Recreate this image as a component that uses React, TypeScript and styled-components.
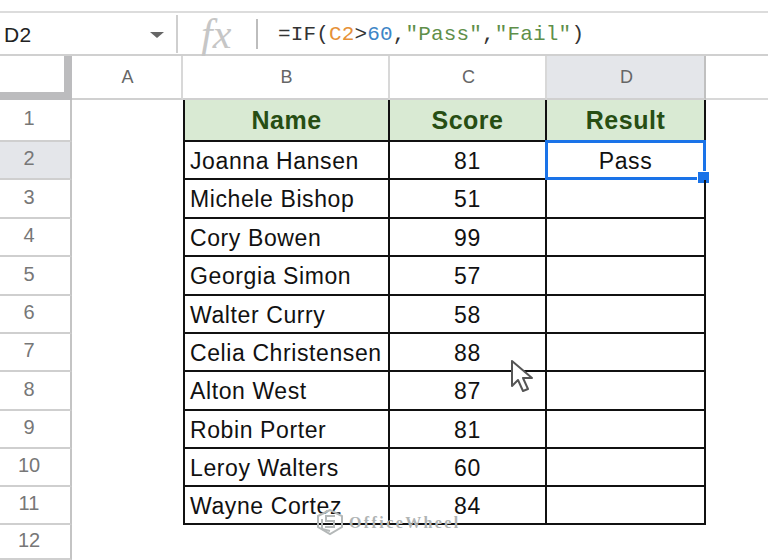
import React from 'react';
import styled, { createGlobalStyle } from 'styled-components';

const people: [string, number][] = [
  ['Joanna Hansen', 81],
  ['Michele Bishop', 51],
  ['Cory Bowen', 99],
  ['Georgia Simon', 57],
  ['Walter Curry', 58],
  ['Celia Christensen', 88],
  ['Alton West', 87],
  ['Robin Porter', 81],
  ['Leroy Walters', 60],
  ['Wayne Cortez', 84],
];

const App: React.FC = () => (
  <Page>
    <GlobalStyle />
    <TopStrip />
    <FormulaBar>
      <NameBox>
        <span>D2</span>
        <Caret />
      </NameBox>
      <FxBox>
        <FxLabel>fx</FxLabel>
        <FxDivider />
      </FxBox>
      <Formula>
        =IF(<Ref>C2</Ref>&gt;<Num>60</Num>,<Str>"Pass"</Str>,<Str>"Fail"</Str>)
      </Formula>
    </FormulaBar>
    <Sheet>
      <Corner />
      <ColHead>A</ColHead>
      <ColHead>B</ColHead>
      <ColHead>C</ColHead>
      <ColHead $active>D</ColHead>
      <ColFill />

      <RowHead>1</RowHead>
      <Blank />
      <NameTitle>Name</NameTitle>
      <TitleCell>Score</TitleCell>
      <TitleCell>Result</TitleCell>
      <Blank />

      {people.map(([name, score], i) => (
        <React.Fragment key={name}>
          <RowHead $active={i === 0}>{i + 2}</RowHead>
          <Blank />
          <NameCell>{name}</NameCell>
          <DataCell>{score}</DataCell>
          <DataCell>
            {i === 0 && (
              <>
                Pass
                <Selection>
                  <Handle />
                </Selection>
              </>
            )}
          </DataCell>
          <Blank />
        </React.Fragment>
      ))}

      <RowHead>12</RowHead>
      <Blank />
      <Blank />
      <Blank />
      <Blank />
      <Blank />

      <Pointer width="24" height="36" viewBox="0 0 24 36">
        <path
          d="M2 2 L2 27 L8 21 L13 32 L18 30 L13 19 L22 19 Z"
          fill="#fff"
          stroke="#555"
          strokeWidth="2"
          strokeLinejoin="round"
        />
      </Pointer>
      <Watermark>
        <svg width="32" height="28" viewBox="0 0 32 28" fill="none" stroke="#b4b8b8" strokeWidth="2">
          <path d="M4 7 L16 1 L28 7 L28 18 L16 25 L4 18 Z" />
          <path d="M21 7 L12 7 L12 12 L20 12 L20 18 L11 18" />
          <path d="M8 10 L8 20 L16 22" />
        </svg>
        <WatermarkText>OfficeWheel</WatermarkText>
      </Watermark>
    </Sheet>
  </Page>
);

const GlobalStyle = createGlobalStyle`
  html, body { margin: 0; padding: 0; background: #fff; }
`;

const Page = styled.div`
  width: 768px;
  height: 560px;
  overflow: hidden;
  display: flex;
  flex-direction: column;
  background: #fff;
  font-family: "Liberation Sans", Arial, sans-serif;
`;

const TopStrip = styled.div`
  height: 13px;
  box-sizing: border-box;
  border-bottom: 2px solid #dcdcdc;
`;

const FormulaBar = styled.div`
  height: 43px;
  box-sizing: border-box;
  border-bottom: 2px solid #d0d0d0;
  display: flex;
  align-items: center;
`;

const NameBox = styled.div`
  width: 178px;
  height: 38px;
  box-sizing: border-box;
  padding: 2px 12px 0 4px;
  display: flex;
  align-items: center;
  justify-content: space-between;
  border-right: 2px solid #cfcfcf;
  font-size: 21px;
  letter-spacing: 0.4px;
  color: #222;
`;

const Caret = styled.span`
  width: 0;
  height: 0;
  border-left: 7px solid transparent;
  border-right: 7px solid transparent;
  border-top: 6px solid #666;
`;

const FxBox = styled.div`
  width: 80px;
  display: flex;
  align-items: center;
  justify-content: space-between;
  padding-left: 23px;
  box-sizing: border-box;
`;

const FxLabel = styled.span`
  font-family: "Liberation Serif", serif;
  font-style: italic;
  font-size: 42px;
  line-height: 38px;
  color: #c6c6c6;
`;

const FxDivider = styled.span`
  width: 2px;
  height: 30px;
  background: #bdbdbd;
`;

const Formula = styled.div`
  margin-left: 20px;
  padding-top: 2px;
  font-family: "Liberation Mono", monospace;
  font-size: 21px;
  letter-spacing: 0.15px;
  color: #333;
  white-space: pre;
`;

const Ref = styled.span`color: #e69138;`;
const Num = styled.span`color: #3d85c6;`;
const Str = styled.span`color: #5f8f4a;`;

const Sheet = styled.div`
  position: relative;
  flex: 1;
  display: grid;
  grid-template-columns: 72px 111px 207px 157px 159px 1fr;
  grid-template-rows: 44px 42px 38px 39px 38px 39px 38px 38px 39px 38px 38px 38px 35px;
`;

const Corner = styled.div`
  box-sizing: border-box;
  border-right: 8px solid #bcbcbe;
  border-bottom: 8px solid #bcbcbe;
`;

const ColHead = styled.div<{ $active?: boolean }>`
  box-sizing: border-box;
  display: flex;
  align-items: center;
  justify-content: center;
  padding-left: 2px;
  font-size: 18px;
  color: #666;
  background: ${({ $active }) => ($active ? '#e4e6ea' : '#fff')};
  border-right: 2px solid ${({ $active }) => ($active ? '#c0c0c0' : '#d8d8d8')};
  border-bottom: 2px solid #d0d0d0;
`;

const ColFill = styled.div`
  border-bottom: 2px solid #d8d8d8;
`;

const RowHead = styled.div<{ $active?: boolean }>`
  box-sizing: border-box;
  display: flex;
  align-items: center;
  justify-content: center;
  padding: 0 12px 3px 0;
  font-size: 20px;
  color: #777;
  background: ${({ $active }) => ($active ? '#e4e6ea' : '#fff')};
  border-right: 2px solid #c4c4c4;
  border-bottom: 2px solid #cfcfcf;
`;

const Blank = styled.div``;

const TitleCell = styled.div`
  box-sizing: border-box;
  display: flex;
  align-items: center;
  justify-content: center;
  background: #d9ead3;
  color: #274e13;
  font-size: 25px;
  font-weight: 700;
  letter-spacing: 0.5px;
  border-right: 2px solid #111;
  border-bottom: 2px solid #111;
`;

const NameTitle = styled(TitleCell)`
  border-left: 2px solid #111;
`;

const DataCell = styled.div`
  position: relative;
  box-sizing: border-box;
  display: flex;
  align-items: center;
  justify-content: center;
  padding-top: 2px;
  font-size: 23px;
  letter-spacing: 0.6px;
  color: #111;
  border-right: 2px solid #111;
  border-bottom: 2px solid #111;
`;

const NameCell = styled(DataCell)`
  justify-content: flex-start;
  padding-left: 5px;
  white-space: nowrap;
  border-left: 2px solid #111;
`;

const Selection = styled.div`
  position: absolute;
  inset: -2px;
  border: 3px solid #1a73e8;
`;

const Handle = styled.div`
  position: absolute;
  right: -7px;
  bottom: -7px;
  width: 11px;
  height: 11px;
  background: #1a73e8;
  border: 1px solid #fff;
`;

const Pointer = styled.svg`
  position: absolute;
  left: 510px;
  top: 303px;
`;

const Watermark = styled.div`
  position: absolute;
  left: 314px;
  top: 453px;
  display: flex;
  align-items: center;
  gap: 3px;
`;

const WatermarkText = styled.span`
  font-family: "Liberation Serif", serif;
  font-size: 16px;
  font-weight: 700;
  letter-spacing: 2.4px;
  color: #b0b4b4;
`;

export default App;
